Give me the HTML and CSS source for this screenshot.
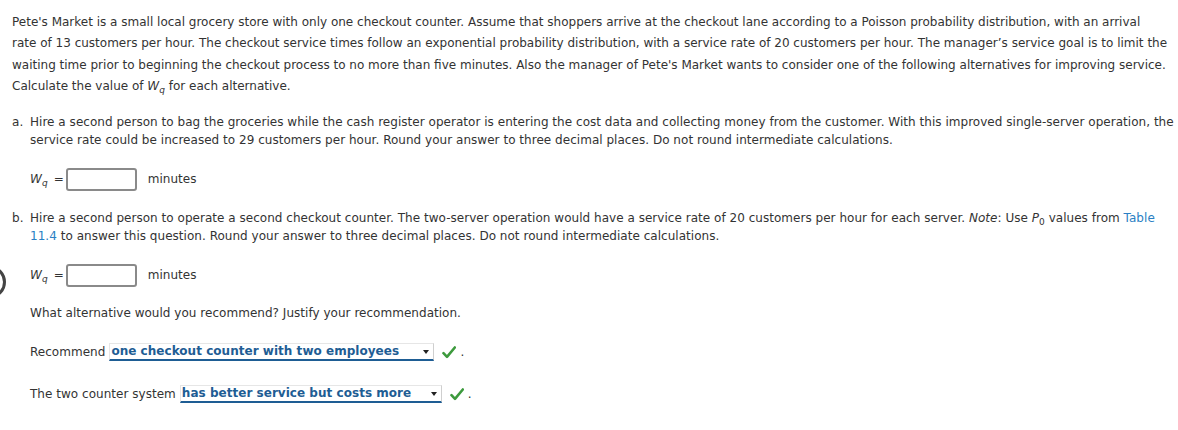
FILE: index.html
```html
<!DOCTYPE html>
<html>
<head>
<meta charset="utf-8">
<link rel="stylesheet" href="styles.css">
</head>
<body>
<div class="edge-mark"></div>
<div class="page">
  <p class="intro">Pete's Market is a small local grocery store with only one checkout counter. Assume that shoppers arrive at the checkout lane according to a Poisson probability distribution, with an arrival<br>rate of 13 customers per hour. The checkout service times follow an exponential probability distribution, with a service rate of 20 customers per hour. The manager’s service goal is to limit the waiting time prior to beginning the checkout process to no more than five minutes. Also the manager of Pete's Market wants to consider one of the following alternatives for improving service. Calculate the value of <i class="var">W<sub>q</sub></i> for each alternative.</p>

  <div class="part part-a">
    <span class="label">a.</span>
    <div class="part-text">Hire a second person to bag the groceries while the cash register operator is entering the cost data and collecting money from the customer. With this improved single-server operation, the service rate could be increased to 29 customers per hour. Round your answer to three decimal places. Do not round intermediate calculations.</div>
  </div>
  <div class="answer">
    <i class="var">W<sub>q</sub></i><span class="eq">=</span><span class="box"></span><span class="unit">minutes</span>
  </div>

  <div class="part part-b">
    <span class="label">b.</span>
    <div class="part-text">Hire a second person to operate a second checkout counter. The two-server operation would have a service rate of 20 customers per hour for each server. <i>Note</i>: Use <i>P</i><sub class="sub0">0</sub> values from <a class="link">Table 11.4</a> to answer this question. Round your answer to three decimal places. Do not round intermediate calculations.</div>
  </div>
  <div class="answer">
    <i class="var">W<sub>q</sub></i><span class="eq">=</span><span class="box"></span><span class="unit">minutes</span>
  </div>

  <div class="question">What alternative would you recommend? Justify your recommendation.</div>

  <div class="choice choice-1">Recommend <span class="select sel-1">one checkout counter with two employees<span class="arrow"></span></span><svg class="check" width="14" height="13" viewBox="0 0 14 13"><path d="M1.5 7.2 L5 10.8 L12.8 1.5" fill="none" stroke="#3d9a3d" stroke-width="2.6" stroke-linecap="round" stroke-linejoin="round"/></svg><span class="dot">.</span></div>

  <div class="choice choice-2">The two counter system <span class="select sel-2">has better service but costs more<span class="arrow"></span></span><svg class="check" width="14" height="13" viewBox="0 0 14 13"><path d="M1.5 7.2 L5 10.8 L12.8 1.5" fill="none" stroke="#3d9a3d" stroke-width="2.6" stroke-linecap="round" stroke-linejoin="round"/></svg><span class="dot">.</span></div>
</div>
</body>
</html>
```

FILE: styles.css
```css
html, body {
  margin: 0;
  padding: 0;
  background: #fff;
}
body {
  font-family: "DejaVu Sans", Verdana, sans-serif;
  font-size: 12px;
  letter-spacing: 0.03px;
  color: #333;
  position: relative;
}
.page {
  padding: 12px 2px 0 12px;
}
.intro {
  margin: 0;
  letter-spacing: 0;
  line-height: 21.3px;
}
sub {
  font-size: 9px;
  vertical-align: -3px;
  line-height: 0;
}
.sub0 {
  font-style: normal;
}
.part {
  display: flex;
  line-height: 18px;
}
.part-a { margin-top: 16px; }
.part-b { margin-top: 18px; }
.label {
  width: 18px;
  flex: none;
}
.part-text {
  flex: 1;
}
.answer {
  display: flex;
  align-items: center;
  padding-left: 18px;
  height: 24px;
  margin-top: 18px;
}
.answer .eq {
  margin-left: 6px;
  margin-right: 2px;
}
.box {
  display: inline-block;
  width: 67px;
  height: 19px;
  border: 2px solid #8a8a8a;
  border-radius: 3px;
}
.unit {
  margin-left: 11px;
}
.question {
  padding-left: 18px;
  margin-top: 17px;
  line-height: 18px;
}
.choice {
  padding-left: 18px;
  line-height: 18px;
  display: flex;
  align-items: center;
}
.choice-1 { margin-top: 21px; }
.choice-2 { margin-top: 24px; }
.select {
  display: inline-block;
  position: relative;
  margin-left: 4px;
  font-weight: bold;
  color: #1e5d94;
  border-bottom: 2px solid #1e5d94;
  border-top: 1px solid #e6e6e6;
  border-left: 1px solid #e6e6e6;
  border-right: 1px solid #cfcfcf;
  line-height: 15px;
  padding: 0 0 0 1px;
}
.sel-1 { width: 322px; }
.sel-2 { width: 259px; }
.arrow {
  position: absolute;
  right: 4px;
  top: 6px;
  width: 0;
  height: 0;
  border-left: 3px solid transparent;
  border-right: 3px solid transparent;
  border-top: 4px solid #222;
}
.check {
  margin-left: 8px;
  flex: none;
}
.dot {
  margin-left: 4px;
  color: #333;
}
.link {
  color: #2a7fc4;
  text-decoration: none;
}
.edge-mark {
  position: absolute;
  left: -24px;
  top: 266px;
  width: 24px;
  height: 26px;
  border: 3px solid #444;
  border-radius: 50%;
}
```
